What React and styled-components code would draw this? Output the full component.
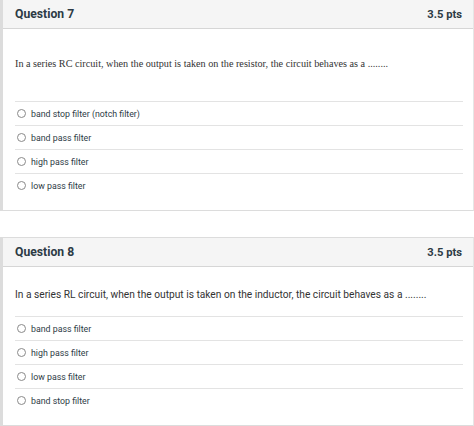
import React from 'react';
import styled, { createGlobalStyle } from 'styled-components';

const GlobalStyle = createGlobalStyle`
  body {
    margin: 0;
    background: #ffffff;
    font-family: Roboto, "Liberation Sans", sans-serif;
    color: #2d3b45;
  }
`;

const Page = styled.div`
  display: flex;
  flex-direction: column;
  gap: 26px;
  margin-top: -1px;
`;

const Card = styled.section`
  border: 1px solid #dcdcdc;
  border-left: 3px solid #dcdcdc;
  border-right: 1px solid #e6e6e6;
  background: #fff;
`;

const Header = styled.header`
  height: 28px;
  display: flex;
  align-items: center;
  justify-content: space-between;
  padding: 0 11px 0 12px;
  background: #f5f5f5;
  border-bottom: 1px solid #d6d6d6;
`;

const Title = styled.h2`
  margin: 0;
  font-family: Roboto, sans-serif;
  font-size: 12.2px;
  font-weight: 700;
  color: #2d3b45;
`;

const Points = styled.span`
  font-family: Roboto, sans-serif;
  font-size: 11.2px;
  font-weight: 700;
  color: #2d3b45;
`;

const Body = styled.div`
  padding: 0 10px 13px 12px;
`;

const Prompt = styled.p`
  margin: 0;
  font-size: 10.2px;
  font-family: ${(p) => (p.$serif ? '"Liberation Serif", serif' : 'Roboto, sans-serif')};
  line-height: 16px;
  color: #333;
  white-space: nowrap;
  padding: ${(p) => (p.$serif ? '27px 0 29px' : '20px 0 13px')};
`;

const Answers = styled.div`
  display: flex;
  flex-direction: column;
`;

const Answer = styled.label`
  height: 23px;
  display: flex;
  align-items: center;
  gap: 5px;
  border-top: 1px solid #e3e3e3;
  font-size: 8.8px;
  color: #2d3b45;
`;

const Radio = styled.span`
  width: 7px;
  height: 7px;
  margin-left: 2px;
  border: 1px solid #8a8a8a;
  border-radius: 50%;
  flex-shrink: 0;
`;

const questions = [
  {
    title: 'Question 7',
    pts: '3.5 pts',
    serif: true,
    text: 'In a series RC circuit, when the output is taken on the resistor, the circuit behaves as a ........',
    answers: ['band stop filter (notch filter)', 'band pass filter', 'high pass filter', 'low pass filter'],
  },
  {
    title: 'Question 8',
    pts: '3.5 pts',
    serif: false,
    text: 'In a series RL circuit, when the output is taken on the inductor, the circuit behaves as a ........',
    answers: ['band pass filter', 'high pass filter', 'low pass filter', 'band stop filter'],
  },
];

export default function App() {
  return (
    <>
      <GlobalStyle />
      <Page>
        {questions.map((q) => (
          <Card key={q.title}>
            <Header>
              <Title>{q.title}</Title>
              <Points>{q.pts}</Points>
            </Header>
            <Body>
              <Prompt $serif={q.serif}>{q.text}</Prompt>
              <Answers>
                {q.answers.map((a) => (
                  <Answer key={a}>
                    <Radio />
                    {a}
                  </Answer>
                ))}
              </Answers>
            </Body>
          </Card>
        ))}
      </Page>
    </>
  );
}
